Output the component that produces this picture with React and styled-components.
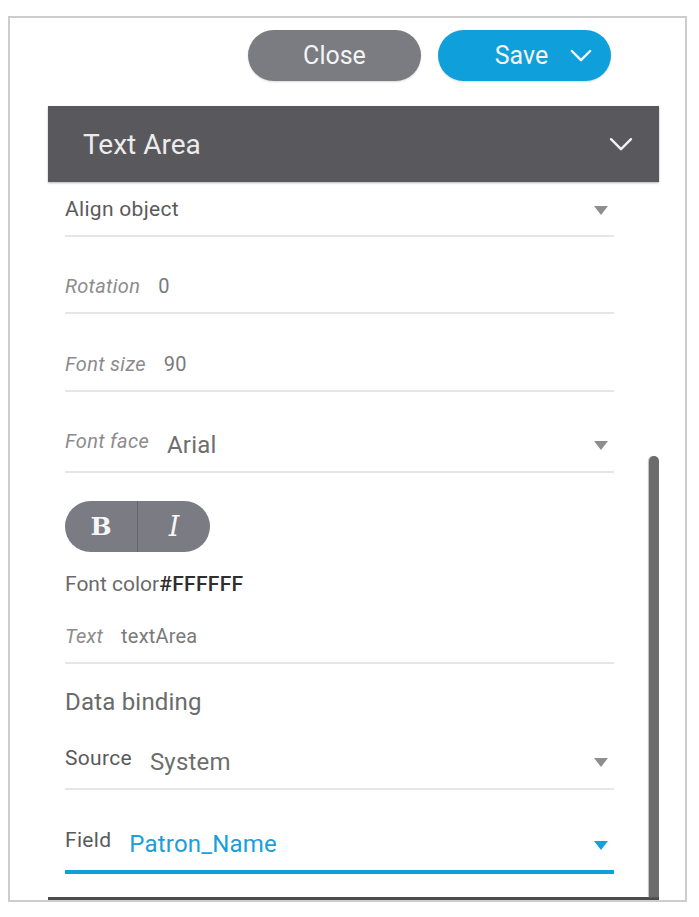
import React from "react";
import styled, { createGlobalStyle } from "styled-components";

const Global = createGlobalStyle`
  html, body { margin: 0; padding: 0; background: #ffffff; }
  body { font-family: Roboto, "Liberation Sans", Arial, sans-serif; }
  * { box-sizing: border-box; }
`;

const Frame = styled.div`
  margin: 16px 0 0 8px;
  width: 679px;
  height: 886px;
  border: 2px solid #cdcdcd;
  display: flex;
  flex-direction: column;
`;

const Toolbar = styled.div`
  display: flex;
  justify-content: flex-end;
  gap: 17px;
  padding: 12px 74px 0 0;
`;

const PillButton = styled.button`
  width: 173px;
  height: 51px;
  border: none;
  border-radius: 26px;
  background: ${(p) => (p.$primary ? "#0fa0dc" : "#7b7b82")};
  color: #f4f4f4;
  font-family: Roboto, "Liberation Sans", sans-serif;
  font-size: 25px;
  display: flex;
  align-items: center;
  justify-content: center;
  gap: 22px;
  padding: ${(p) => (p.$primary ? "0 0 0 38px" : "0")};
  box-shadow: 0 1px 2px rgba(0, 0, 0, 0.15);
`;

const Panel = styled.div`
  margin: 25px 0 0 38px;
  width: 611px;
  flex: 1;
  display: flex;
  flex-direction: column;
`;

const Header = styled.div`
  height: 76px;
  background: #58585d;
  display: flex;
  align-items: center;
  justify-content: space-between;
  padding: 0 26px 0 35px;
  color: #ececec;
  font-size: 28px;
  box-shadow: 0 1px 2px rgba(0, 0, 0, 0.3);
`;

const Body = styled.div`
  position: relative;
  flex: 1;
  padding: 0 45px 0 17px;
  border-bottom: 3px solid #4c4c4c;
  display: flex;
  flex-direction: column;
`;

const ScrollThumb = styled.div`
  position: absolute;
  right: 0;
  top: 274px;
  bottom: 0;
  width: 10px;
  border-radius: 5px 5px 0 0;
  background: #6c6c6c;
  box-shadow: -1px 0 1px #bdbdbd;
`;

const Row = styled.div`
  display: flex;
  align-items: flex-end;
  padding-top: ${(p) => p.$top}px;
  padding-bottom: 14px;
  border-bottom: ${(p) => (p.$active ? "4px solid #0fa0dc" : "2px solid #e6e6e6")};
  gap: 18px;
`;

const Label = styled.span`
  font-size: ${(p) => (p.$size ? p.$size : 20)}px;
  line-height: 24px;
  letter-spacing: 0.3px;
  font-style: ${(p) => (p.$plain ? "normal" : "italic")};
  color: ${(p) => (p.$plain ? "#5a5a5a" : "#8c8c8c")};
  ${(p) => (p.$raise ? "transform: translateY(-4px);" : "")}
`;

const Value = styled.span`
  font-size: ${(p) => (p.$big ? 24 : 20)}px;
  line-height: 24px;
  letter-spacing: 0.2px;
  color: ${(p) => (p.$blue ? "#1a9fd9" : p.$big ? "#6e6e6e" : "#7a7a7a")};
`;

const Caret = styled.span`
  margin-left: auto;
  margin-right: 6px;
  margin-bottom: ${(p) => p.$mb}px;
  width: 0;
  height: 0;
  border-left: 7px solid transparent;
  border-right: 7px solid transparent;
  border-top: 9px solid ${(p) => (p.$blue ? "#1a9fd9" : "#8e8e8e")};
  align-self: flex-end;
`;

const StyleToggle = styled.div`
  margin-top: 28px;
  width: 145px;
  height: 51px;
  border-radius: 26px;
  background: #7b7b83;
  display: flex;
  overflow: hidden;
`;

const ToggleHalf = styled.div`
  flex: 1;
  display: flex;
  align-items: center;
  justify-content: center;
  color: #f6f6f6;
  font-family: "DejaVu Serif", "Liberation Serif", serif;
  font-size: ${(p) => (p.$italic ? 27 : 25)}px;
  font-weight: ${(p) => (p.$italic ? 400 : 600)};
  font-style: ${(p) => (p.$italic ? "italic" : "normal")};
  & + & { border-left: 1px solid #66666c; }
`;

const ColorLine = styled.div`
  margin-top: 20px;
  font-size: 21px;
  line-height: 24px;
  color: #6a6a6a;
`;

const ColorValue = styled.span`
  color: #2e2e2e;
  font-weight: 500;
  letter-spacing: 0.3px;
`;

const SectionTitle = styled.div`
  margin-top: 25px;
  font-size: 24px;
  line-height: 26px;
  letter-spacing: 0.2px;
  color: #6a6a6a;
`;

const Chevron = ({ size = 24, color = "#fff", width = 2.2 }) => (
  <svg width={size} height={size * 0.6} viewBox="0 0 24 14" fill="none">
    <path d="M2 2 L12 12 L22 2" stroke={color} strokeWidth={width * 1.1} strokeLinecap="round" strokeLinejoin="round" />
  </svg>
);

export default function App() {
  return (
    <>
      <Global />
      <Frame>
        <Toolbar>
          <PillButton>Close</PillButton>
          <PillButton $primary>
            Save
            <Chevron size={22} color="#f4f4f4" width={2.4} />
          </PillButton>
        </Toolbar>
        <Panel>
          <Header>
            Text Area
            <Chevron size={24} color="#f0f0f0" width={2.2} />
          </Header>
          <Body>
            <Row $top={15}>
              <Label $plain $size={21}>Align object</Label>
              <Caret $mb={6} />
            </Row>
            <Row $top={37}>
              <Label>Rotation</Label>
              <Value>0</Value>
            </Row>
            <Row $top={38}>
              <Label>Font size</Label>
              <Value>90</Value>
            </Row>
            <Row $top={41}>
              <Label $raise>Font face</Label>
              <Value $big>Arial</Value>
              <Caret $mb={7} />
            </Row>
            <StyleToggle>
              <ToggleHalf>B</ToggleHalf>
              <ToggleHalf $italic>I</ToggleHalf>
            </StyleToggle>
            <ColorLine>
              Font color<ColorValue>#FFFFFF</ColorValue>
            </ColorLine>
            <Row $top={28}>
              <Label>Text</Label>
              <Value>textArea</Value>
            </Row>
            <SectionTitle>Data binding</SectionTitle>
            <Row $top={35}>
              <Label $plain $raise $size={21}>Source</Label>
              <Value $big>System</Value>
              <Caret $mb={7} />
            </Row>
            <Row $top={42} $active>
              <Label $plain $raise $size={21}>Field</Label>
              <Value $big $blue>Patron_Name</Value>
              <Caret $blue $mb={6} />
            </Row>
            <ScrollThumb />
          </Body>
        </Panel>
      </Frame>
    </>
  );
}
